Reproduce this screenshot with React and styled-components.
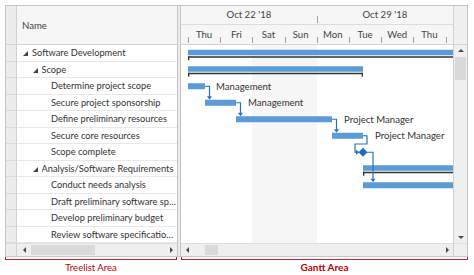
import React from 'react';
import styled, { createGlobalStyle } from 'styled-components';

const FONT = `Lato, "Liberation Sans", Arial, sans-serif`;
const BLUE = '#5b9bd6';
const LINK = '#2a72b9';
const RED = '#c4262e';

const GlobalStyle = createGlobalStyle`
  html, body { margin: 0; padding: 0; background: #ffffff; }
  body { font-family: ${FONT}; color: #333; }
  *, *::before, *::after { box-sizing: border-box; }
`;

const Page = styled.div`
  width: 474px;
  height: 275px;
  padding: 5px 0 0 5px;
  overflow: hidden;
`;

const Control = styled.div`
  display: flex;
  width: 463px;
  height: 252px;
  border: 1px solid #c6c6c6;
  background: #fff;
`;

/* ---------- Tree list ---------- */
const TreeList = styled.div`
  display: flex;
  flex-direction: column;
  width: 171px;
  flex: none;
`;

const TreeHeader = styled.div`
  display: flex;
  height: 39px;
  flex: none;
  border-bottom: 1px solid #d4d4d4;
  background: #f6f6f6;
`;

const SelectorCell = styled.div`
  width: 11px;
  flex: none;
  background: #ececec;
  border-right: 1px solid #d2d2d2;
  border-bottom: ${p => (p.$bare ? 'none' : '1px solid #dadada')};
`;

const HeaderName = styled.div`
  flex: 1;
  display: flex;
  align-items: center;
  padding-left: 5px;
  font-size: 9.6px;
  color: #444;
`;

const TreeRow = styled.div`
  display: flex;
  height: 16.5px;
  flex: none;
`;

const NameCell = styled.div`
  flex: 1;
  min-width: 0;
  display: flex;
  align-items: center;
  padding-left: ${p => 5 + p.$level * 9.5}px;
  border-bottom: 1px solid #e8e8e8;
  font-size: 9.25px;
  color: #333;
  white-space: nowrap;
`;

const ExpanderSlot = styled.span`
  width: 10px;
  flex: none;
  display: flex;
  align-items: center;
  padding-left: 1px;
  padding-top: 2px;
`;

const NameText = styled.span`
  overflow: hidden;
  text-overflow: ellipsis;
  padding-right: 1px;
`;

const Expander = () => (
  <svg width="5" height="5" viewBox="0 0 5 5">
    <polygon points="5,0 5,5 0,5" fill="#444" />
  </svg>
);

/* ---------- Scrollbars ---------- */
const HScroll = styled.div`
  display: flex;
  height: 13px;
  flex: none;
  background: #efefef;
  border-top: 1px solid #dedede;
`;

const ScrollTrack = styled.div`
  flex: 1;
  display: flex;
  align-items: stretch;
  padding: 1px 0;
`;

const ArrowBtn = styled.div`
  width: ${p => p.$w || 12}px;
  height: ${p => p.$h || 'auto'};
  flex: none;
  display: flex;
  align-items: center;
  justify-content: center;
`;

const Spacer = styled.span`
  flex: 1;
`;

const Thumb = styled.div`
  background: #dadada;
  flex: none;
  margin-left: ${p => p.$offset}px;
  width: ${p => p.$size}px;
`;

const VThumb = styled.div`
  background: #d9d9d9;
  flex: none;
  margin-top: ${p => p.$offset}px;
  height: ${p => p.$size}px;
  margin-left: 1px;
  margin-right: 1px;
`;

const Tri = styled.span`
  width: 0;
  height: 0;
  border-style: solid;
  border-color: transparent;
  ${p =>
    p.$dir === 'left'
      ? `border-width: 3px 3px 3px 0; border-right-color: #4a4a4a;`
      : p.$dir === 'right'
      ? `border-width: 3px 0 3px 3px; border-left-color: #4a4a4a;`
      : p.$dir === 'up'
      ? `border-width: 0 3px 3px 3px; border-bottom-color: #4a4a4a;`
      : `border-width: 3px 3px 0 3px; border-top-color: #4a4a4a;`}
`;

/* ---------- Splitter ---------- */
const Splitter = styled.div`
  width: 4px;
  flex: none;
  background: #ececec;
  border-left: 1px solid #c4c4c4;
  border-right: 1px solid #c4c4c4;
`;

/* ---------- Gantt ---------- */
const Gantt = styled.div`
  display: flex;
  flex: 1;
  min-width: 0;
`;

const GanttMain = styled.div`
  width: 272px;
  flex: none;
  display: flex;
  flex-direction: column;
`;

const Timeline = styled.div`
  height: 39px;
  flex: none;
  display: flex;
  flex-direction: column;
  background: #f6f6f6;
  border-bottom: 1px solid #d4d4d4;
`;

const Tier = styled.div`
  display: flex;
  height: ${p => p.$h}px;
  flex: none;
  border-bottom: ${p => (p.$line ? '1px solid #dcdcdc' : 'none')};
  overflow: hidden;
`;

const TierCell = styled.div`
  position: relative;
  flex: none;
  width: ${p => p.$w}px;
  display: flex;
  align-items: center;
  justify-content: center;
  font-size: 9.6px;
  color: #444;
  white-space: nowrap;
  overflow: hidden;
  padding-bottom: 1px;
  &::before {
    content: '';
    display: ${p => (p.$tick ? 'block' : 'none')};
    position: absolute;
    left: 0;
    bottom: 1px;
    width: 1px;
    height: ${p => p.$tickH || 6}px;
    background: #a0a0a0;
  }
`;

const ChartBody = styled.div`
  position: relative;
  height: 198px;
  flex: none;
  overflow: hidden;
`;

const DayStrip = styled.div`
  display: flex;
  height: 100%;
`;

const DayColumn = styled.div`
  flex: none;
  width: ${p => p.$w}px;
  background: ${p => (p.$weekend ? '#f6f6f6' : '#ffffff')};
`;

const ChartCanvas = styled.svg`
  position: absolute;
  left: 0;
  top: 0;
`;

const VColumn = styled.div`
  width: 14px;
  flex: none;
  display: flex;
  flex-direction: column;
  border-left: 1px solid #d0d0d0;
  background: #efefef;
`;

const VBlank = styled.div`
  height: 39px;
  flex: none;
  background: #f0f0f0;
  border-bottom: 1px solid #d4d4d4;
`;

const VScroll = styled.div`
  height: 198px;
  flex: none;
  display: flex;
  flex-direction: column;
`;

const Corner = styled.div`
  height: 13px;
  flex: none;
  border-top: 1px solid #dedede;
  background: #efefef;
`;

/* ---------- Annotations ---------- */
const Notes = styled.div`
  display: flex;
  width: 463px;
  gap: 4px;
`;

const Note = styled.div`
  width: ${p => p.$w}px;
  flex: none;
  display: flex;
  flex-direction: column;
  align-items: center;
`;

const Bracket = styled.div`
  align-self: stretch;
  height: 3px;
  border: 1.5px solid ${RED};
  border-top: none;
`;

const NoteLabel = styled.div`
  margin-top: 2px;
  font-size: ${p => (p.$bold ? 10 : 9.5)}px;
  font-weight: ${p => (p.$bold ? 700 : 400)};
  line-height: 11px;
  color: #c00000;
`;

/* ---------- Data ---------- */
const rows = [
  { name: 'Software Development', level: 0, exp: true },
  { name: 'Scope', level: 1, exp: true },
  { name: 'Determine project scope', level: 2 },
  { name: 'Secure project sponsorship', level: 2 },
  { name: 'Define preliminary resources', level: 2 },
  { name: 'Secure core resources', level: 2 },
  { name: 'Scope complete', level: 2 },
  { name: 'Analysis/Software Requirements', level: 1, exp: true },
  { name: 'Conduct needs analysis', level: 2 },
  { name: 'Draft preliminary software specifications', level: 2 },
  { name: 'Develop preliminary budget', level: 2 },
  { name: 'Review software specifications/budget', level: 2 },
];

const DAY_W = 32.2;
const days = [
  { label: '', w: 7 },
  { label: 'Thu', w: DAY_W },
  { label: 'Fri', w: DAY_W },
  { label: 'Sat', w: DAY_W, weekend: true },
  { label: 'Sun', w: DAY_W, weekend: true },
  { label: 'Mon', w: DAY_W },
  { label: 'Tue', w: DAY_W },
  { label: 'Wed', w: DAY_W },
  { label: 'Thu', w: DAY_W },
  { label: '', w: 272 - 7 - 8 * DAY_W },
];

const weeks = [
  { label: "Oct 22 '18", w: 7 + 4 * DAY_W },
  { label: "Oct 29 '18", w: 272 - (7 + 4 * DAY_W), tick: true },
];

const ROW_H = 16.5;
const cy = i => i * ROW_H + ROW_H / 2;

const Summary = ({ x1, x2, row, leftTick = true, rightTick = false }) => {
  const c = cy(row);
  return (
    <g>
      <rect x={x1} y={c - 3.5} width={x2 - x1} height={5.5} fill={BLUE} />
      <rect x={x1} y={c + 3} width={x2 - x1} height={1.5} fill="#333" />
      {leftTick && <rect x={x1} y={c + 3} width={1.3} height={4} fill="#333" />}
      {rightTick && <rect x={x2 - 1.3} y={c + 3} width={1.3} height={4} fill="#333" />}
    </g>
  );
};

const Task = ({ x1, x2, row }) => (
  <rect x={x1} y={cy(row) - 3} width={x2 - x1} height={6} fill={BLUE} />
);

const DownArrow = ({ x, y }) => (
  <polygon points={`${x - 2.5},${y - 3.5} ${x + 2.5},${y - 3.5} ${x},${y}`} fill={LINK} />
);
const RightArrow = ({ x, y }) => (
  <polygon points={`${x - 3.5},${y - 2.5} ${x - 3.5},${y + 2.5} ${x},${y}`} fill={LINK} />
);

const Link = ({ pts }) => (
  <polyline points={pts.map(p => p.join(',')).join(' ')} fill="none" stroke={LINK} strokeWidth="1.2" />
);

const Label = ({ x, row, children }) => (
  <text x={x} y={cy(row) + 3.5} fontSize="9.6" fill="#333" fontFamily={FONT}>
    {children}
  </text>
);

const Chart = () => (
  <ChartCanvas width="272" height="198" viewBox="0 0 272 198">
    <Summary x1={7} x2={274} row={0} />
    <Summary x1={7} x2={182} row={1} rightTick />
    <Task x1={7} x2={24} row={2} />
    <Task x1={24} x2={55} row={3} />
    <Task x1={55} x2={151} row={4} />
    <Task x1={151} x2={182} row={5} />
    <Summary x1={182} x2={274} row={7} />
    <Task x1={182} x2={274} row={8} />

    <Link pts={[[24, cy(2)], [28.5, cy(2)], [28.5, cy(3) - 5]]} />
    <DownArrow x={28.5} y={cy(3) - 3} />
    <Link pts={[[55, cy(3)], [59.5, cy(3)], [59.5, cy(4) - 5]]} />
    <DownArrow x={59.5} y={cy(4) - 3} />
    <Link pts={[[151, cy(4)], [155.5, cy(4)], [155.5, cy(5) - 5]]} />
    <DownArrow x={155.5} y={cy(5) - 3} />
    <Link pts={[[182, cy(5)], [186, cy(5)], [186, 99], [174, 99], [174, cy(6)], [176, cy(6)]]} />
    <RightArrow x={178.5} y={cy(6)} />
    <Link pts={[[186, cy(6)], [192, cy(6)], [192, cy(8) - 5]]} />
    <DownArrow x={192} y={cy(8) - 3} />

    <polygon
      points={`182,${cy(6) - 4.5} 186.5,${cy(6)} 182,${cy(6) + 4.5} 177.5,${cy(6)}`}
      fill="#1f6cbf"
    />

    <Label x={35} row={2}>Management</Label>
    <Label x={67} row={3}>Management</Label>
    <Label x={163} row={4}>Project Manager</Label>
    <Label x={194} row={5}>Project Manager</Label>
  </ChartCanvas>
);

export default function App() {
  return (
    <>
      <GlobalStyle />
      <Page>
        <Control>
          <TreeList>
            <TreeHeader>
              <SelectorCell $bare />
              <HeaderName>Name</HeaderName>
            </TreeHeader>
            {rows.map((r, i) => (
              <TreeRow key={i}>
                <SelectorCell />
                <NameCell $level={r.level}>
                  <ExpanderSlot>{r.exp && <Expander />}</ExpanderSlot>
                  <NameText>{r.name}</NameText>
                </NameCell>
              </TreeRow>
            ))}
            <HScroll>
              <SelectorCell $bare />
              <ScrollTrack>
                <ArrowBtn $w={14}><Tri $dir="left" /></ArrowBtn>
                <Thumb $offset={0} $size={64} />
                <Spacer />
                <ArrowBtn $w={12}><Tri $dir="right" /></ArrowBtn>
              </ScrollTrack>
            </HScroll>
          </TreeList>

          <Splitter />

          <Gantt>
            <GanttMain>
              <Timeline>
                <Tier $h={19} $line>
                  {weeks.map((w, i) => (
                    <TierCell key={i} $w={w.w} $tick={w.tick} $tickH={7}>
                      {w.label}
                    </TierCell>
                  ))}
                </Tier>
                <Tier $h={19}>
                  {days.map((d, i) => (
                    <TierCell key={i} $w={d.w} $tick={i > 0}>
                      {d.label}
                    </TierCell>
                  ))}
                </Tier>
              </Timeline>
              <ChartBody>
                <DayStrip>
                  {days.map((d, i) => (
                    <DayColumn key={i} $w={d.w} $weekend={d.weekend} />
                  ))}
                </DayStrip>
                <Chart />
              </ChartBody>
              <HScroll>
                <ScrollTrack>
                  <ArrowBtn $w={12}><Tri $dir="left" /></ArrowBtn>
                  <Thumb $offset={12} $size={13} />
                  <Spacer />
                  <ArrowBtn $w={12}><Tri $dir="right" /></ArrowBtn>
                </ScrollTrack>
              </HScroll>
            </GanttMain>
            <VColumn>
              <VBlank />
              <VScroll>
                <ArrowBtn $w={13} $h="11px"><Tri $dir="up" /></ArrowBtn>
                <VThumb $offset={1} $size={23} />
                <Spacer />
                <ArrowBtn $w={13} $h="11px"><Tri $dir="down" /></ArrowBtn>
              </VScroll>
              <Corner />
            </VColumn>
          </Gantt>
        </Control>

        <Notes>
          <Note $w={172}>
            <Bracket />
            <NoteLabel>Treelist Area</NoteLabel>
          </Note>
          <Note $w={287}>
            <Bracket />
            <NoteLabel $bold>Gantt Area</NoteLabel>
          </Note>
        </Notes>
      </Page>
    </>
  );
}
